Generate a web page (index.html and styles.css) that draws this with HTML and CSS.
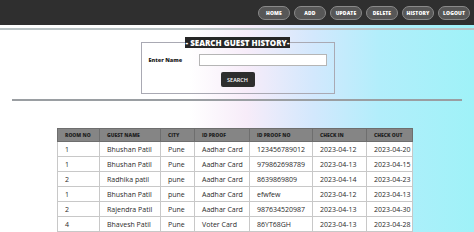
FILE: index.html
```html
<!DOCTYPE html>
<html lang="en">
<head>
    <meta charset="UTF-8">
    <meta name="viewport" content="width=device-width, initial-scale=1.0">
    <meta name="format-detection" content="telephone=no">
    <title>Guest History</title>
    <link rel="stylesheet" href="styles.css">
</head>
<body>
    <nav class="navbar">
        <a class="nav-btn" href="#">HOME</a>
        <a class="nav-btn" href="#">ADD</a>
        <a class="nav-btn" href="#">UPDATE</a>
        <a class="nav-btn" href="#">DELETE</a>
        <a class="nav-btn" href="#">HISTORY</a>
        <a class="nav-btn" href="#">LOGOUT</a>
    </nav>
    <div class="top-line"></div>

    <form class="search-form">
        <fieldset>
            <legend>- SEARCH GUEST HISTORY-</legend>
            <div class="field-row">
                <label for="gname">Enter Name</label>
                <input type="text" id="gname">
            </div>
            <button type="button" class="search-btn">SEARCH</button>
        </fieldset>
    </form>

    <hr class="divider">

    <table class="history">
        <thead>
            <tr>
                <th>ROOM NO</th>
                <th>GUEST NAME</th>
                <th>CITY</th>
                <th>ID PROOF</th>
                <th>ID PROOF NO</th>
                <th>CHECK IN</th>
                <th>CHECK OUT</th>
            </tr>
        </thead>
        <tbody>
            <tr><td>1</td><td>Bhushan Patil</td><td>Pune</td><td>Aadhar Card</td><td>123456789012</td><td>2023-04-12</td><td>2023-04-20</td></tr>
            <tr><td>1</td><td>Bhushan Patil</td><td>Pune</td><td>Aadhar Card</td><td>979862698789</td><td>2023-04-13</td><td>2023-04-15</td></tr>
            <tr><td>2</td><td>Radhika patil</td><td>pune</td><td>Aadhar Card</td><td>8639869809</td><td>2023-04-14</td><td>2023-04-23</td></tr>
            <tr><td>1</td><td>Bhushan Patil</td><td>pune</td><td>Aadhar Card</td><td>efwfew</td><td>2023-04-12</td><td>2023-04-13</td></tr>
            <tr><td>2</td><td>Rajendra Patil</td><td>Pune</td><td>Aadhar Card</td><td>987634520987</td><td>2023-04-13</td><td>2023-04-30</td></tr>
            <tr><td>4</td><td>Bhavesh Patil</td><td>Pune</td><td>Voter Card</td><td>86YT68GH</td><td>2023-04-13</td><td>2023-04-28</td></tr>
        </tbody>
    </table>
    <div class="bottom-line"></div>
</body>
</html>
```

FILE: styles.css
```css
body {
    margin: 0;
    font-family: "Open Sans", Arial, sans-serif;
    background: linear-gradient(to right, #ffffff 0%, #ffffff 40%, #f7ecf9 52%, #d3e8fd 66%, #b2eefb 80%, #9ff2f8 100%);
    min-height: 232px;
    overflow: hidden;
}
.navbar {
    height: 25px;
    background: #2f2f2f;
    display: flex;
    justify-content: flex-end;
    align-items: center;
    gap: 4px;
    padding-right: 4px;
}
.nav-btn {
    width: 30px;
    height: 12px;
    display: flex;
    align-items: center;
    justify-content: center;
    background: #575757;
    border: 1px solid #8a8a8a;
    border-radius: 8px;
    color: #fff;
    font-size: 5px;
    font-weight: 800;
    text-decoration: none;
    letter-spacing: 0.1px;
}
.top-line {
    height: 2px;
    margin-top: 3px;
    background: #b9c2c4;
}
.search-form {
    width: 193px;
    margin: 7px auto 0;
}
fieldset {
    margin: 0;
    padding: 6px 7px 6px;
    border: 1px solid #a9a9b3;
}
legend {
    margin: 0 auto;
    padding: 0 1px;
    background: #262626;
    color: #fff;
    font-size: 8px;
    font-weight: 800;
    line-height: 11px;
}
.field-row {
    display: flex;
    align-items: center;
}
label {
    width: 50px;
    font-size: 5.5px;
    font-weight: 800;
    color: #222;
}
input {
    width: 128px;
    height: 12px;
    padding: 0 2px;
    border: 1px solid #b5b5b5;
    box-sizing: border-box;
    background: #fff;
}
.search-btn {
    display: block;
    margin: 6px 0 0 72px;
    width: 34px;
    height: 15px;
    padding: 0;
    background: #2e2e2e;
    color: #fff;
    border: none;
    border-radius: 2px;
    font-family: "Open Sans", Arial, sans-serif;
    font-size: 5.5px;
    font-weight: 600;
}
.divider {
    margin: 5px 12px 0 12px;
    border: none;
    height: 2px;
    background: #9a9ea2;
}
.history {
    margin: 27px 0 0 57px;
    width: 356px;
    border-collapse: collapse;
    border: 1px solid #6e6e6e;
    font-size: 7px;
    color: #2a2a2a;
}
.history th {
    height: 12px;
    padding: 0 0 0 7px;
    background: #858585;
    color: #222;
    font-size: 5px;
    font-weight: 800;
    text-align: left;
    border: 1px solid #6e6e6e;
}
.history td {
    height: 14px;
    padding: 0 0 0 7px;
    background: #fff;
    color: #2a2a2a;
    border: 1px solid #c8c8c8;
    white-space: nowrap;
}
.history th:nth-child(1) { width: 34px; }
.history th:nth-child(2) { width: 53px; }
.history th:nth-child(3) { width: 26px; }
.history th:nth-child(4) { width: 47px; }
.history th:nth-child(5) { width: 55px; }
.history th:nth-child(6) { width: 46px; }
.bottom-line {
    height: 3px;
    margin-top: 1px;
    background: #b3b8ba;
}
```
